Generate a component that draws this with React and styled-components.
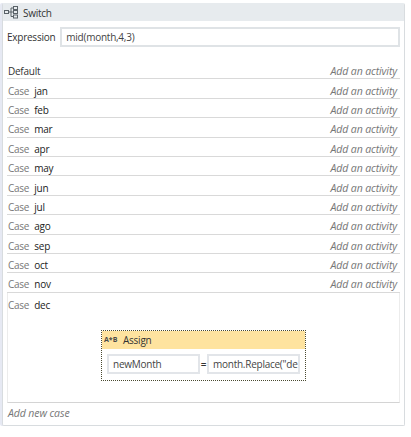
import React from 'react'
import styled, { createGlobalStyle } from 'styled-components'

const GlobalStyle = createGlobalStyle`
  html, body {
    margin: 0;
    padding: 0;
    background: #fff;
  }
  body {
    width: 411px;
    height: 437px;
    overflow: hidden;
    font-family: "Open Sans", "Noto Sans", sans-serif;
    font-size: 10px;
    letter-spacing: -0.25px;
    color: #333;
  }
`

const Page = styled.div`
  padding: 3px 0 0 2px;
  width: 411px;
  height: 437px;
  box-sizing: border-box;
  background: #fff;
`

const Panel = styled.div`
  width: 403px;
  height: 423px;
  box-sizing: border-box;
  background: #fff;
  border: 1px solid #d8dcdf;
  border-top-color: #e7ebee;
  border-radius: 2px;
  box-shadow: -2px 0 0 #e6e9f3;
  display: flex;
  flex-direction: column;
`

const Header = styled.div`
  height: 17px;
  background: #e7ebee;
  display: flex;
  align-items: center;
  gap: 5px;
  padding-left: 1px;
  color: #333;
`

const Body = styled.div`
  flex: 1;
  display: flex;
  flex-direction: column;
  padding: 6px 4px 0 4px;
`

const ExpressionRow = styled.div`
  display: flex;
  align-items: center;
  gap: 5px;
  margin-bottom: 13px;
`

const ExpressionField = styled.div`
  flex: 1;
  height: 20px;
  line-height: 17px;
  box-sizing: border-box;
  border: 2px solid #dfe3e6;
  padding-left: 4px;
  color: #444;
`

const Row = styled.div`
  height: 19.4px;
  box-sizing: border-box;
  border-bottom: 1px solid #d9d9d9;
  display: flex;
  align-items: center;
  justify-content: space-between;
  padding: 4px 1px 0 1px;
`

const CaseLabel = styled.span`
  color: #777;
  margin-right: 5px;
`

const CaseValue = styled.span`
  color: #222;
`

const AddActivity = styled.span`
  font-size: 10.5px;
  letter-spacing: -0.1px;
  font-style: italic;
  color: #777;
  padding-right: 2px;
`

const OpenCase = styled.div`
  height: 110px;
  box-sizing: border-box;
  border-left: 1px solid #ececec;
  border-right: 1px solid #ececec;
  border-bottom: 1px solid #d4d4d4;
  display: flex;
  flex-direction: column;
`

const OpenCaseTitle = styled.div`
  height: 37px;
  padding-top: 5px;
  box-sizing: border-box;
`

const AssignCard = styled.div`
  width: 205px;
  height: 51px;
  margin-left: 93px;
  box-sizing: border-box;
  border: 1px dotted #4a4a30;
  display: flex;
  flex-direction: column;
`

const AssignHeader = styled.div`
  height: 18px;
  background: #fee39f;
  display: flex;
  align-items: center;
  gap: 6px;
  padding-left: 2px;
`

const AssignIcon = styled.span`
  font-size: 7px;
  font-weight: 700;
  letter-spacing: 0;
  color: #4a4a4a;
  width: 13px;
  white-space: nowrap;
`

const AssignBody = styled.div`
  flex: 1;
  display: flex;
  align-items: center;
  padding: 0 5px;
`

const AssignField = styled.div`
  width: 93px;
  height: 20px;
  line-height: 17px;
  box-sizing: border-box;
  border: 2px solid #e2e5e9;
  padding-left: 4px;
  white-space: nowrap;
  color: #444;
`

const Equals = styled.span`
  width: 7px;
  text-align: center;
  font-weight: 600;
`

const AddCase = styled.div`
  font-size: 10.5px;
  letter-spacing: -0.1px;
  font-style: italic;
  color: #777;
  padding: 3px 1px;
`

const SwitchIcon = () => (
  <svg width="14" height="13" viewBox="0 0 14 13" fill="none" stroke="#5a6268" strokeWidth="1">
    <rect x="0.5" y="4.5" width="4" height="3" />
    <rect x="9.5" y="0.5" width="4" height="3" />
    <rect x="9.5" y="4.5" width="4" height="3" />
    <rect x="9.5" y="9" width="4" height="3" />
    <path d="M4.5 6h5M7 2v8.5M7 2h2.5M7 10.5h2.5" />
  </svg>
)

const months = ['jan', 'feb', 'mar', 'apr', 'may', 'jun', 'jul', 'ago', 'sep', 'oct', 'nov']

export default function App() {
  return (
    <Page>
      <GlobalStyle />
      <Panel>
        <Header>
          <SwitchIcon />
          Switch
        </Header>
        <Body>
          <ExpressionRow>
            Expression
            <ExpressionField>mid(month,4,3)</ExpressionField>
          </ExpressionRow>
          <Row>
            <span>Default</span>
            <AddActivity>Add an activity</AddActivity>
          </Row>
          {months.map(m => (
            <Row key={m}>
              <span>
                <CaseLabel>Case</CaseLabel>
                <CaseValue>{m}</CaseValue>
              </span>
              <AddActivity>Add an activity</AddActivity>
            </Row>
          ))}
          <OpenCase>
            <OpenCaseTitle>
              <CaseLabel>Case</CaseLabel>
              <CaseValue>dec</CaseValue>
            </OpenCaseTitle>
            <AssignCard>
              <AssignHeader>
                <AssignIcon>A*B</AssignIcon>
                Assign
              </AssignHeader>
              <AssignBody>
                <AssignField>newMonth</AssignField>
                <Equals>=</Equals>
                <AssignField>month.Replace("de</AssignField>
              </AssignBody>
            </AssignCard>
          </OpenCase>
          <AddCase>Add new case</AddCase>
        </Body>
      </Panel>
    </Page>
  )
}
